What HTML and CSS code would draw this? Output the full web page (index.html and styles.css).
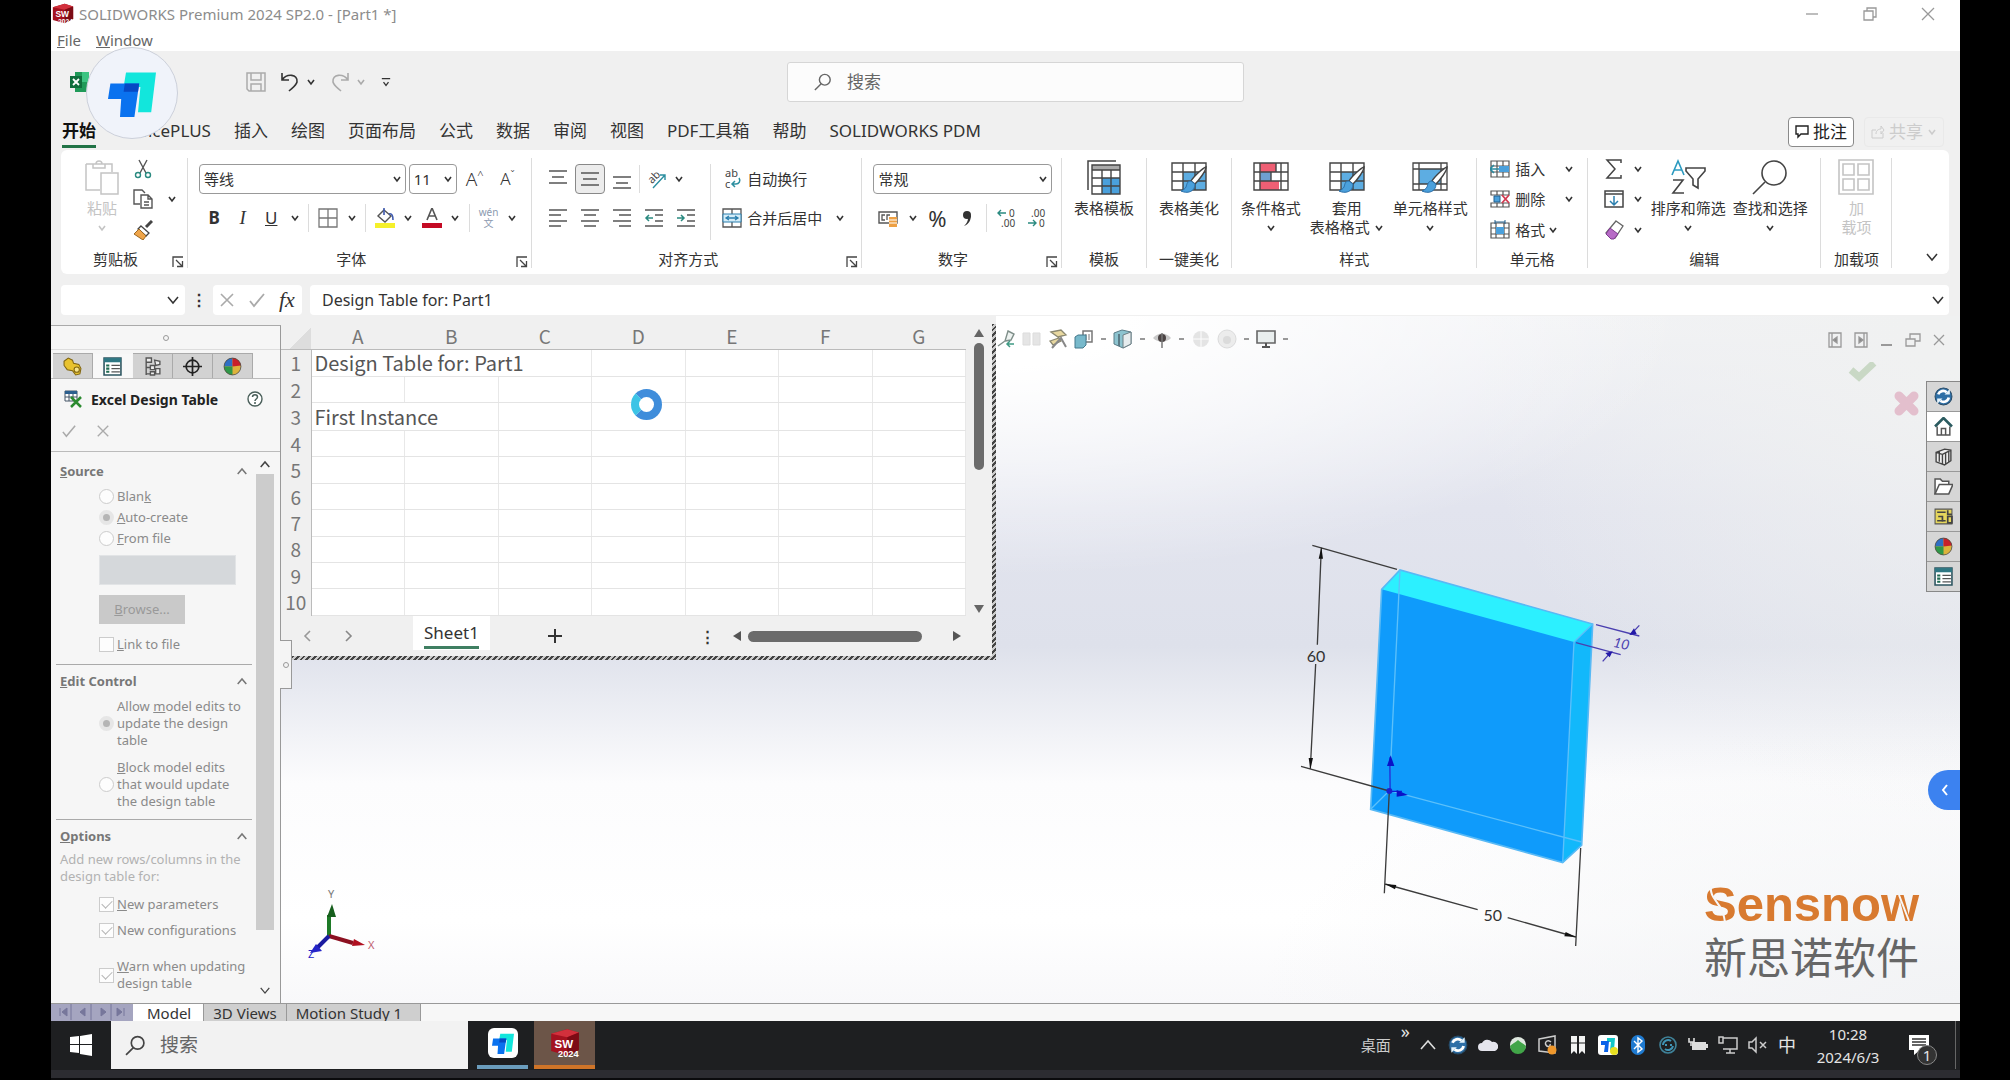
FILE: index.html
```
<!DOCTYPE html>
<html lang="zh-CN">
<head>
    <meta charset="UTF-8">
    <meta name="viewport" content="width=device-width, initial-scale=1.0">
    <title>SOLIDWORKS Premium 2024 SP2.0 - [Part1 *]</title>
    <link rel="stylesheet" href="styles.css">
</head>

<body>
    <!-- Shared icons -->
    <svg class="sprite" aria-hidden="true">
        <symbol id="caret" viewBox="0 0 10 10"><path d="M2 3l3 4 3-4" fill="none" stroke="currentColor" stroke-width="1.6"/></symbol>
        <symbol id="chevron" viewBox="0 0 14 10"><path d="M2 2l5 6 5-6" fill="none" stroke="currentColor" stroke-width="1.5"/></symbol>
        <symbol id="chevron-up" viewBox="0 0 14 10"><path d="M2 8l5-6 5 6" fill="none" stroke="currentColor" stroke-width="1.8"/></symbol>
        <symbol id="launcher" viewBox="0 0 12 12"><path d="M1 11V1h10M4 4l6 6M10.500 5v5.500H5" fill="none" stroke="#444" stroke-width="1.3"/></symbol>
        <symbol id="search" viewBox="0 0 20 20"><path d="M8 12l-7 7" fill="none" stroke="currentColor" stroke-width="1.6"/><circle cx="12" cy="7.500" r="6" fill="none" stroke="currentColor" stroke-width="1.6"/></symbol>
        <symbol id="cross" viewBox="0 0 16 16"><path d="M2 2l12 12M14 2L2 14" fill="none" stroke="currentColor" stroke-width="1.6"/></symbol>
        <symbol id="tick" viewBox="0 0 16 16"><path d="M1 9l4 5L15 2" fill="none" stroke="currentColor" stroke-width="1.8"/></symbol>
        <symbol id="brush" viewBox="0 0 36 36"><path d="M35 8c-3 1-12 9-15 14l4 3c4-4 11-13 11-17z" fill="#fff" stroke="#444" stroke-width="1.4"/><path d="M20 22c-4 0-4 3-5 6-1 2-3 3-5 4 6 3 14 1 14-7z" fill="#4aa0dc" stroke="#2b6fa8"/></symbol>
        <symbol id="solidworks" viewBox="0 0 26 26"><path d="M1 5l14-4 10 3v15l-10 5-14-4z" fill="#a4121f"/><path d="M1 5l14-4 10 3-10 4z" fill="#d2303c"/><path d="M15 8l10-4v15l-10 5z" fill="#7c0b15"/><text x="4" y="17" class="sw-letters">SW</text><text x="7" y="25" class="sw-year">2024</text></symbol>
        <symbol id="meeting" viewBox="0 0 40 40"><path d="M15 3h25l-4 33H25l2-21H13z" fill="#12e6dc"/><path d="M2 12h24l-4 28H10l1-15H0z" fill="#0a72ef"/><path d="M14 12h12l-1 7H13z" fill="#0649c4"/></symbol>
        <symbol id="ball" viewBox="0 0 18 18"><circle cx="9" cy="9" r="8" fill="#ddb33c"/><path d="M9 9V1a8 8 0 0 0-8 8z" fill="#2f6fc4"/><path d="M9 9V1a8 8 0 0 1 8 7z" fill="#c8202a"/><path d="M9 9H1a8 8 0 0 0 8 8z" fill="#2f9848"/><circle cx="9" cy="9" r="8" fill="none" stroke="#444" stroke-width=".7"/></symbol>
        <symbol id="list" viewBox="0 0 18 18"><path d="M1 1h16v16H1z" fill="#fff" stroke="#2d5560" stroke-width="1.5"/><path d="M1 1h16v4H1z" fill="#2f7783"/><path d="M3 8h3M3 11h3M3 14h3" stroke="#1f6a50" stroke-width="2"/><path d="M8 8h8M8 11h8M8 14h8" stroke="#555" stroke-width="1.2"/></symbol>
        <symbol id="recycle" viewBox="0 0 18 18"><circle cx="9" cy="9" r="8" fill="#2e6fa6" stroke="#274a66"/><path d="M4 7a5 5 0 0 1 8-2M14 10a5 5 0 0 1-8 3" fill="none" stroke="#fff" stroke-width="2.500"/><path d="M10 7h5V2zM8 11H3v5z" fill="#e6f3fb"/></symbol>
    </svg>

    <main class="app">
        <header class="title-bar">
            <svg class="app-icon"><use href="#solidworks"/></svg>
            <h1>SOLIDWORKS Premium 2024 SP2.0 - [Part1 *]</h1>
            <div class="window-buttons">
                <button aria-label="Minimize"><svg viewBox="0 0 16 16"><path d="M2 8h12"/></svg></button>
                <button aria-label="Restore"><svg viewBox="0 0 16 16"><path d="M2 5h9v9H2zM5 5V2h9v9h-3"/></svg></button>
                <button aria-label="Close"><svg viewBox="0 0 16 16"><path d="M2 2l12 12M14 2L2 14"/></svg></button>
            </div>
        </header>
        <nav class="menu-bar">
            <a href="#"><u>F</u>ile</a>
            <a href="#"><u>W</u>indow</a>
        </nav>

        <div class="quick-bar">
            <svg class="excel-icon" viewBox="0 0 20 20"><path d="M5 0h14v20H5z" fill="#1f9a58"/><path d="M12 0h7v10h-7z" fill="#3cc481"/><path d="M0 4h12v12H0z" fill="#0f6e3c"/><path d="M3 7l6 6M9 7l-6 6" stroke="#fff" stroke-width="1.8"/></svg>
            <div class="quick-tools">
                <button aria-label="Save"><svg class="i20 faded" viewBox="0 0 20 20"><path d="M1 1h18v18H3l-2-2zM5 1v7h10V1M5 19v-7h10v7" fill="none" stroke="currentColor" stroke-width="1.5"/></svg></button>
                <button aria-label="Undo"><svg class="i20" viewBox="0 0 20 20"><path d="M2 1v7h7M2 8c5-7 16-6 15 2-1 4-5 6-8 9" fill="none" stroke="currentColor" stroke-width="1.6"/></svg><svg class="caret"><use href="#caret"/></svg></button>
                <button aria-label="Redo" class="faded"><svg class="i20" viewBox="0 0 20 20"><path d="M18 1v7h-7M18 8C13 1 2 2 3 10c1 4 5 6 8 9" fill="none" stroke="currentColor" stroke-width="1.6"/></svg><svg class="caret"><use href="#caret"/></svg></button>
                <button aria-label="Customize"><svg class="caret" viewBox="0 0 10 12"><path d="M0 2h10M2 6l3 4 3-4" fill="none" stroke="currentColor" stroke-width="1.5"/></svg></button>
            </div>
            <label class="search-box">
                <svg><use href="#search"/></svg>
                <input type="text" placeholder="搜索" aria-label="搜索">
            </label>
        </div>

        <nav class="tab-bar">
            <a href="#" class="active">开始</a>
            <a href="#">OfficePLUS</a>
            <a href="#">插入</a>
            <a href="#">绘图</a>
            <a href="#">页面布局</a>
            <a href="#">公式</a>
            <a href="#">数据</a>
            <a href="#">审阅</a>
            <a href="#">视图</a>
            <a href="#">PDF工具箱</a>
            <a href="#">帮助</a>
            <a href="#">SOLIDWORKS PDM</a>
            <button class="comment-btn"><svg viewBox="0 0 14 14"><path d="M1 1h12v8H6l-3 3V9H1z" fill="none" stroke="currentColor" stroke-width="1.4"/></svg>批注</button>
            <button class="share-btn" disabled><svg viewBox="0 0 14 14"><path d="M5 5H1v8h11V8M5 9c0-4 3-5 5-5V1l3 4-3 4V6" fill="none" stroke="currentColor"/></svg>共享<svg class="caret"><use href="#caret"/></svg></button>
        </nav>

        <section class="ribbon">
            <div class="group">
                <div class="group-body clipboard">
                    <button class="big" disabled>
                        <svg viewBox="0 0 36 36"><path d="M2 5h26v8M2 5v26h14M9 5h3c0-4 6-4 6 0h3v4H9zM17 14h17v21H17z" fill="none" stroke="currentColor" stroke-width="1.5"/></svg>
                        <span>粘贴</span><svg class="caret"><use href="#caret"/></svg>
                    </button>
                    <div class="stack">
                        <button aria-label="剪切"><svg class="i20" viewBox="0 0 20 20"><path d="M6 1l7 13M14 1L7 14" stroke="#555" stroke-width="1.4"/><circle cx="5" cy="16" r="2.500" fill="none" stroke="#2a8a80" stroke-width="1.4"/><circle cx="15" cy="16" r="2.500" fill="none" stroke="#2a8a80" stroke-width="1.4"/></svg></button>
                        <button aria-label="复制"><svg class="i20" viewBox="0 0 20 20"><path d="M7 15H1V1h8l3 3M8 6h7l4 4v9H8zM15 6v4h4M11 13h5M11 16h5" fill="none" stroke="#555" stroke-width="1.4"/></svg><svg class="caret"><use href="#caret"/></svg></button>
                        <button aria-label="格式刷"><svg class="i20" viewBox="0 0 20 20"><path d="M19 1l-6 6" stroke="#444" stroke-width="3"/><path d="M8 6l8 7-3 3-8-7z" fill="#fff" stroke="#444" stroke-width="1.3"/><path d="M6 9l7 7-3 4-9-6z" fill="#efa54a" stroke="#9b6722"/></svg></button>
                    </div>
                </div>
                <div class="group-label with-launcher">剪贴板<svg><use href="#launcher"/></svg></div>
            </div>

            <div class="group">
                <div class="group-body font-body">
                    <div class="row">
                        <div class="combo combo-font"><select aria-label="字体"><option>等线</option></select><svg class="caret"><use href="#caret"/></svg></div>
                        <div class="combo combo-size"><select aria-label="字号"><option>11</option></select><svg class="caret"><use href="#caret"/></svg></div>
                        <button class="letter grow">A<sup>^</sup></button>
                        <button class="letter shrink">A<sup>ˇ</sup></button>
                    </div>
                    <div class="row spread">
                        <button class="i20 letter"><b>B</b></button>
                        <button class="i20 letter serif"><i>I</i></button>
                        <button class="i20 letter"><u>U</u></button>
                        <svg class="caret"><use href="#caret"/></svg>
                        <span class="sep"></span>
                        <button aria-label="边框"><svg class="i20" viewBox="0 0 20 20"><path d="M1 1h18v18H1zM10 1v18M1 10h18" fill="none" stroke="#777" stroke-width="1.3"/></svg></button>
                        <svg class="caret"><use href="#caret"/></svg>
                        <span class="sep"></span>
                        <button aria-label="填充颜色"><svg class="i20" viewBox="0 0 20 20"><path d="M0 15h20v5H0z" fill="#f5f02a"/><path d="M9 2l7 6-6 6-7-6z" fill="#fff" stroke="#555" stroke-width="1.4"/><path d="M9 7V0M14 6c3-1 4 2 4 6" fill="none" stroke="#3f5bb0" stroke-width="1.6"/></svg></button>
                        <svg class="caret"><use href="#caret"/></svg>
                        <button aria-label="字体颜色"><svg class="i20" viewBox="0 0 20 20"><path d="M0 15h20v5H0z" fill="#c40a24"/><path d="M5 12l5-12 5 12M7 8h6" fill="none" stroke="#555" stroke-width="1.6"/></svg></button>
                        <svg class="caret"><use href="#caret"/></svg>
                        <span class="sep"></span>
                        <button class="i20 phonetic">wén<br>文</button>
                        <svg class="caret"><use href="#caret"/></svg>
                    </div>
                </div>
                <div class="group-label with-launcher">字体<svg><use href="#launcher"/></svg></div>
            </div>

            <div class="group">
                <div class="group-body align-body">
                    <div class="align-left">
                        <div class="row gap-7">
                            <button aria-label="顶端对齐"><svg class="i20 lines" viewBox="0 0 20 20"><path d="M1 2h18M4 8h12M1 14h18"/></svg></button>
                            <button aria-label="垂直居中" class="pressed"><svg class="i20 lines" viewBox="0 0 20 20"><path d="M1 4h18M3 10h14M1 16h18"/></svg></button>
                            <button aria-label="底端对齐"><svg class="i20 lines" viewBox="0 0 20 20"><path d="M1 8h18M4 14h12M1 19h18"/></svg></button>
                            <span class="sep"></span>
                            <button aria-label="方向"><svg class="i20" viewBox="0 0 20 20"><text x="1" y="12" transform="rotate(-45 7 9)" class="tiny-ab">ab</text><path d="M6 19L18 6M18 11V6h-5" fill="none" stroke="#2c8fa0" stroke-width="1.4"/></svg></button>
                            <svg class="caret"><use href="#caret"/></svg>
                        </div>
                        <div class="row gap-12">
                            <button aria-label="左对齐"><svg class="i20 lines" viewBox="0 0 20 20"><path d="M1 2h18M1 7h12M1 13h18M1 18h12"/></svg></button>
                            <button aria-label="居中"><svg class="i20 lines" viewBox="0 0 20 20"><path d="M1 2h18M4 7h12M1 13h18M4 18h12"/></svg></button>
                            <button aria-label="右对齐"><svg class="i20 lines" viewBox="0 0 20 20"><path d="M1 2h18M7 7h12M1 13h18M7 18h12"/></svg></button>
                            <button aria-label="减少缩进"><svg class="i20 lines" viewBox="0 0 20 20"><path d="M1 2h18M11 7h8M11 13h8M1 18h18"/><path class="teal" d="M9 10H2M5 7l-3 3 3 3"/></svg></button>
                            <button aria-label="增加缩进"><svg class="i20 lines" viewBox="0 0 20 20"><path d="M1 2h18M11 7h8M11 13h8M1 18h18"/><path class="teal" d="M1 10h7M5 7l3 3-3 3"/></svg></button>
                        </div>
                    </div>
                    <span class="sep tall"></span>
                    <div class="align-right">
                        <button class="row gap-5"><svg class="i20" viewBox="0 0 20 20"><text x="3" y="8" class="tiny-ab">ab</text><text x="3" y="19" class="tiny-ab">c</text><path d="M17 9c2 3 0 6-3 6h-4M13 12l-3 3 3 3" fill="none" stroke="#2c8fa0" stroke-width="1.5"/></svg>自动换行</button>
                        <button class="row gap-5"><svg class="i20" viewBox="0 0 20 20"><path d="M1 1h18v18H1zM10 1v5M10 14v5" fill="#fff" stroke="#555" stroke-width="1.3"/><path d="M1 6h18v8H1z" fill="#d5edf8" stroke="#2b7fae"/><path d="M4 10h12M7 8l-3 2 3 2M13 8l3 2-3 2" fill="none" stroke="#2b7fae" stroke-width="1.3"/></svg>合并后居中<svg class="caret merge-caret"><use href="#caret"/></svg></button>
                    </div>
                </div>
                <div class="group-label with-launcher">对齐方式<svg><use href="#launcher"/></svg></div>
            </div>

            <div class="group">
                <div class="group-body number-body">
                    <div class="combo combo-number"><select aria-label="数字格式"><option>常规</option></select><svg class="caret"><use href="#caret"/></svg></div>
                    <div class="row spread">
                        <button aria-label="会计数字格式"><svg class="i20" viewBox="0 0 20 20"><path d="M1 4h18v11H1z" fill="#fff" stroke="#555" stroke-width="1.4"/><path d="M7 7H4v5h3M12 7H9v5" fill="none" stroke="#555" stroke-width="1.3"/><path d="M11 9h8v10h-8z" fill="#eda044"/><path d="M11 12h8M11 15h8" stroke="#fff"/></svg></button>
                        <svg class="caret"><use href="#caret"/></svg>
                        <button class="i20 percent">%</button>
                        <button class="comma" aria-label="千位分隔样式"><svg class="i20" viewBox="0 0 20 20"><circle cx="10" cy="7" r="4" fill="#333"/><path d="M14 7c0 5-2 9-7 11 3-3 4-5 4-8z" fill="#333"/></svg></button>
                        <span class="sep"></span>
                        <button aria-label="增加小数位数"><svg class="i20" viewBox="0 0 20 20"><text x="12" y="9" class="decimal">0</text><text x="4" y="19" class="decimal">.00</text><path d="M9 5H1M4 2L1 5l3 3" fill="none" stroke="#2a8a80" stroke-width="1.4"/></svg></button>
                        <button aria-label="减少小数位数"><svg class="i20" viewBox="0 0 20 20"><text x="4" y="9" class="decimal">.00</text><text x="12" y="19" class="decimal">0</text><path d="M1 15h8M6 12l3 3-3 3" fill="none" stroke="#2a8a80" stroke-width="1.4"/></svg></button>
                    </div>
                </div>
                <div class="group-label with-launcher">数字<svg><use href="#launcher"/></svg></div>
            </div>

            <div class="group">
                <div class="group-body center">
                    <button class="big">
                        <svg viewBox="0 0 36 36"><path d="M2 31V2h28" fill="none" stroke="#444" stroke-width="1.5"/><path d="M6 6h28v29H6z" fill="#fff"/><path d="M16 19h18v16H16z" fill="#4aa0dc"/><path d="M6 6h28v5H6z" fill="#aaa"/><path d="M6 6h28v29H6zM6 11h28M6 19h28M6 27h28M16 11v24M25 11v24" fill="none" stroke="#444" stroke-width="1.4"/></svg>
                        <span>表格模板</span>
                    </button>
                </div>
                <div class="group-label">模板</div>
            </div>

            <div class="group">
                <div class="group-body center">
                    <button class="big">
                        <svg viewBox="0 0 36 36"><path d="M1 4h34v27H1z" fill="#fff"/><path d="M12 13h23v18H12z" fill="#5dade2"/><path d="M1 4h34v27H1zM1 13h34M1 22h34M12 4v27M24 4v27" fill="none" stroke="#444" stroke-width="1.4"/><use href="#brush"/></svg>
                        <span>表格美化</span>
                    </button>
                </div>
                <div class="group-label">一键美化</div>
            </div>

            <div class="group">
                <div class="group-body center styles-body">
                    <button class="big">
                        <svg viewBox="0 0 36 36"><path d="M1 4h34v27H1z" fill="#fff"/><path d="M7 4h16v9H7zM7 22h19v9H7z" fill="#ef5f74"/><path d="M7 13h11v9H7z" fill="#6f9fd0"/><path d="M1 4h34v27H1zM1 13h34M1 22h34M7 4v27M28 4v27M18 13v9M23 4v9" fill="none" stroke="#444" stroke-width="1.4"/></svg>
                        <span>条件格式</span><svg class="caret"><use href="#caret"/></svg>
                    </button>
                    <button class="big">
                        <svg viewBox="0 0 36 36"><path d="M1 4h34v27H1z" fill="#fff"/><path d="M12 13h23v18H12z" fill="#5dade2"/><path d="M1 4h34v27H1zM1 13h34M1 22h34M12 4v27M24 4v27" fill="none" stroke="#444" stroke-width="1.4"/><use href="#brush"/></svg>
                        <span>套用</span><span>表格格式<svg class="caret inline"><use href="#caret"/></svg></span>
                    </button>
                    <button class="big">
                        <svg viewBox="0 0 36 36"><path d="M1 4h34v27H1z" fill="#fff"/><path d="M7 10h22v15H7z" fill="#5dade2"/><path d="M1 4h34v27H1zM1 10h34M1 25h34M7 4v27M29 4v27" fill="none" stroke="#444" stroke-width="1.3"/><use href="#brush"/></svg>
                        <span>单元格样式</span><svg class="caret"><use href="#caret"/></svg>
                    </button>
                </div>
                <div class="group-label">样式</div>
            </div>

            <div class="group">
                <div class="group-body center">
                    <div class="stack cells-stack">
                        <button><svg class="i20" viewBox="0 0 20 20"><path d="M1 2h18v16H1zM1 7h18M1 13h18M7 2v16M13 2v16" fill="#fff" stroke="#555" stroke-width="1.2"/><path d="M9 7h10v6H9z" fill="#4aa0dc"/><path d="M9 10H1M4 6l-4 4 4 4" fill="none" stroke="#2a8aa0" stroke-width="1.6"/></svg><span>插入</span><svg class="caret"><use href="#caret"/></svg></button>
                        <button><svg class="i20" viewBox="0 0 20 20"><path d="M1 2h18v4H1zM1 14h18v4H1zM7 2v4M13 2v4M7 14v4M13 14v4" fill="#fff" stroke="#555" stroke-width="1.2"/><path d="M4 7h6v6H4z" fill="#4aa0dc" stroke="#235f8c"/><path d="M12 6l7 8M19 6l-7 8" stroke="#d23a50" stroke-width="1.8"/></svg><span>删除</span><svg class="caret"><use href="#caret"/></svg></button>
                        <button><svg class="i20" viewBox="0 0 20 20"><path d="M1 3h18v15H1zM1 8h18M1 14h18M6 3v15M14 3v15" fill="#fff" stroke="#555" stroke-width="1.2"/><path d="M6 7h8v7H6z" fill="#4aa0dc"/><path d="M5 0v4M15 0v4M5 2h10" stroke="#235f8c"/></svg><span>格式</span><svg class="caret near"><use href="#caret"/></svg></button>
                    </div>
                </div>
                <div class="group-label">单元格</div>
            </div>

            <div class="group">
                <div class="group-body edit-body">
                    <div class="stack">
                        <button aria-label="求和"><svg class="i20" viewBox="0 0 20 20"><path d="M17 4V1H3l8 9-8 9h14v-3" fill="none" stroke="#444" stroke-width="1.5"/></svg><svg class="caret"><use href="#caret"/></svg></button>
                        <button aria-label="填充"><svg class="i20" viewBox="0 0 20 20"><path d="M1 2h18v16H1zM1 5h18" fill="#fff" stroke="#444" stroke-width="1.5"/><path d="M10 7v9M6 12l4 4 4-4" fill="none" stroke="#2b7fae" stroke-width="1.5"/></svg><svg class="caret"><use href="#caret"/></svg></button>
                        <button aria-label="清除"><svg class="i20" viewBox="0 0 20 20"><path d="M12 1l7 5-8 12H7l-5-5z" fill="#fff" stroke="#666" stroke-width="1.3"/><path d="M6 8l8 6-4 5H7l-5-5z" fill="#b76bc6" stroke="#7f3c91"/></svg><svg class="caret"><use href="#caret"/></svg></button>
                    </div>
                    <button class="big">
                        <svg viewBox="0 0 36 36"><path d="M2 16L8 2l6 14M4 11h8" fill="none" stroke="#2b9ac0" stroke-width="1.6"/><path d="M3 21h10L3 34h11" fill="none" stroke="#444" stroke-width="1.6"/><path d="M16 9h19v3l-7 8v9l-5-3v-6l-7-8z" fill="none" stroke="#444" stroke-width="1.6"/></svg>
                        <span>排序和筛选</span><svg class="caret"><use href="#caret"/></svg>
                    </button>
                    <button class="big">
                        <svg viewBox="0 0 36 36"><circle cx="22" cy="14" r="12" fill="#fff" stroke="#444" stroke-width="1.6"/><path d="M13 23L1 35" stroke="#444" stroke-width="1.6"/></svg>
                        <span>查找和选择</span><svg class="caret"><use href="#caret"/></svg>
                    </button>
                </div>
                <div class="group-label">编辑</div>
            </div>

            <div class="group">
                <div class="group-body center">
                    <button class="big" disabled>
                        <svg viewBox="0 0 36 36"><path d="M1 1h34v34H1zM5 5h11v11H5zM20 5h11v11H20zM5 20h11v11H5zM20 20h11v11H20z" fill="none" stroke="currentColor" stroke-width="1.6"/></svg>
                        <span>加</span><span>载项</span>
                    </button>
                </div>
                <div class="group-label">加载项</div>
            </div>

            <button class="collapse" aria-label="折叠功能区"><svg class="chev"><use href="#chevron"/></svg></button>
        </section>

        <section class="formula-bar">
            <div class="name-box"><input type="text" aria-label="名称框"><svg class="chev"><use href="#chevron"/></svg></div>
            <span class="dots">⋮</span>
            <div class="fx-box">
                <svg class="i16"><use href="#cross"/></svg>
                <svg class="i16"><use href="#tick"/></svg>
                <i>fx</i>
            </div>
            <div class="formula-input"><input type="text" value="Design Table for: Part1" aria-label="编辑栏"><svg class="chev"><use href="#chevron"/></svg></div>
        </section>

        <section class="workspace">
            <aside class="panel">
                <div class="panel-grip"><span></span></div>
                <div class="panel-tabs">
                    <button aria-label="FeatureManager"><svg viewBox="0 0 18 18"><path d="M1 4l4-3 4 2 1 3 5 1 2 4-1 5-4 1-3-4-5-1-3-4z" fill="#e8c22e" stroke="#806512"/><circle cx="13" cy="12" r="2.500" fill="#f7e48c" stroke="#806512"/></svg></button>
                    <button aria-label="PropertyManager" class="active"><svg><use href="#list"/></svg></button>
                    <button aria-label="ConfigurationManager"><svg viewBox="0 0 18 18"><path d="M3 1h5v4H3zM3 5v12M3 10h4M3 16h4M7 8h4v4H7zM7 14h4v3H7zM11 3l5 1v3l-4 1zM12 11h4v5h-4z" fill="#eee" stroke="#555" stroke-width="1.3"/></svg></button>
                    <button aria-label="DimXpertManager"><svg viewBox="0 0 18 18"><circle cx="9" cy="9" r="6" fill="none" stroke="#222" stroke-width="1.6"/><path d="M9 0v18M0 9h18" stroke="#222" stroke-width="1.6"/></svg></button>
                    <button aria-label="DisplayManager"><svg><use href="#ball"/></svg></button>
                </div>
                <div class="panel-title">
                    <svg class="i18" viewBox="0 0 18 18"><path d="M1 1h12v10H1z" fill="#fff" stroke="#456"/><path d="M1 1h12v3H1z" fill="#2c5f8e"/><path d="M1 7h12M5 4v7M9 4v7" stroke="#456"/><path d="M7 7l10 10M17 7L7 17" stroke="#2b8a2f" stroke-width="2.500"/></svg>
                    <h2>Excel Design Table</h2>
                    <svg class="i16 help" viewBox="0 0 16 16"><circle cx="8" cy="8" r="7" fill="#fff" stroke="#4a5f5a" stroke-width="1.4"/><path d="M5.500 6c0-3 5-3 5 0 0 2-2.500 2-2.500 4M8 11v2" fill="none" stroke="#4a5f5a" stroke-width="1.5"/></svg>
                </div>
                <div class="panel-actions">
                    <svg class="i14"><use href="#tick"/></svg>
                    <svg class="i14"><use href="#cross"/></svg>
                </div>
                <div class="panel-scroll">
                    <form class="panel-form">
                        <fieldset>
                            <h3><span><u>S</u>ource</span><svg><use href="#chevron-up"/></svg></h3>
                            <label class="option"><input type="radio" name="source" disabled><span>Blan<u>k</u></span></label>
                            <label class="option"><input type="radio" name="source" checked disabled><span><u>A</u>uto-create</span></label>
                            <label class="option"><input type="radio" name="source" disabled><span><u>F</u>rom file</span></label>
                            <input type="text" class="file-name" aria-label="File name" disabled>
                            <button class="browse" type="button" disabled><u>B</u>rowse...</button>
                            <label class="option"><input type="checkbox" disabled><span><u>L</u>ink to file</span></label>
                        </fieldset>
                        <fieldset class="edit-control">
                            <h3><span><u>E</u>dit Control</span><svg><use href="#chevron-up"/></svg></h3>
                            <label class="option"><input type="radio" name="edit" checked disabled><span>Allow <u>m</u>odel edits to<br>update the design<br>table</span></label>
                            <label class="option"><input type="radio" name="edit" disabled><span><u>B</u>lock model edits<br>that would update<br>the design table</span></label>
                        </fieldset>
                        <fieldset class="options">
                            <h3><span><u>O</u>ptions</span><svg><use href="#chevron-up"/></svg></h3>
                            <p>Add new rows/columns in the<br>design table for:</p>
                            <label class="option"><input type="checkbox" checked disabled><span><u>N</u>ew parameters</span></label>
                            <label class="option"><input type="checkbox" checked disabled><span>New configurations</span></label>
                            <label class="option warn"><input type="checkbox" checked disabled><span><u>W</u>arn when updating<br>design table</span></label>
                        </fieldset>
                    </form>
                    <div class="panel-scrollbar">
                        <svg><use href="#chevron-up"/></svg>
                        <span></span>
                        <svg><use href="#chevron"/></svg>
                    </div>
                </div>
                <div class="splitter"><span></span></div>
            </aside>

            <div class="viewport">
                <div class="hud">
                    <svg viewBox="0 0 20 20"><path d="M12 2l6 3-3 6-6 1zM9 12l-7 5" fill="#eef3f1" stroke="#7f8f8a" stroke-width="1.4"/><path d="M18 15h-7M14 12l-3 3 3 3" fill="none" stroke="#3f9a84" stroke-width="1.5"/></svg>
                    <svg viewBox="0 0 20 20" class="dim"><path d="M1 4h7v12H1zM11 4h7v12h-7z" fill="#ccc" stroke="#bbb"/></svg>
                    <svg viewBox="0 0 20 20"><path d="M3 3l10-2 5 5-8 2zM2 12l9-3 2 3-8 4z" fill="#e8d8a0" stroke="#8b8871" stroke-width="1.3"/><path d="M4 19l9-10 5 9" fill="none" stroke="#888" stroke-width="2"/></svg>
                    <svg viewBox="0 0 20 20"><path d="M9 2h9v11H9z" fill="#fff" stroke="#777" stroke-width="1.5"/><path d="M12 5v6M15 5v6" stroke="#777"/><path d="M1 8l3-2h8v10l-3 3H1z" fill="#78b9cb" stroke="#44798c"/></svg>
                    <i></i>
                    <svg viewBox="0 0 20 20"><path d="M1 4l8-3 9 2v12l-8 4-9-4z" fill="#8cc3cf" stroke="#5b7c87"/><path d="M10 6l8-3v12l-8 4z" fill="#e6ecee" stroke="#6d7e84"/><path d="M6 5v12" stroke="#5b7c87" stroke-width="2"/></svg>
                    <i></i>
                    <svg viewBox="0 0 20 20"><path d="M1 9c5-6 13-6 18 0-5 5-13 5-18 0z" fill="#c9c9c9"/><circle cx="10" cy="9" r="4" fill="#4b4343"/><path d="M10 4v15" stroke="#777" stroke-width="1.5"/></svg>
                    <i></i>
                    <svg viewBox="0 0 20 20" class="dim"><circle cx="10" cy="10" r="8" fill="#ccc"/><path d="M2 10h16M10 2v16" stroke="#fff"/></svg>
                    <svg viewBox="0 0 20 20" class="dim"><circle cx="10" cy="10" r="9" fill="#ddd" stroke="#bbb"/><circle cx="10" cy="11" r="4" fill="#bbb"/></svg>
                    <i></i>
                    <svg viewBox="0 0 20 20"><path d="M1 2h18v12H1z" fill="#e9eeee" stroke="#666" stroke-width="1.6"/><path d="M10 14v4M6 18h8" stroke="#555" stroke-width="2"/></svg>
                    <i></i>
                </div>

                <div class="doc-buttons">
                    <button aria-label="Pane left"><svg viewBox="0 0 16 16"><path d="M2 1h12v14H2zM5 1v14"/><path d="M10 5v6L6 8z" fill="#888"/></svg></button>
                    <button aria-label="Pane right"><svg viewBox="0 0 16 16"><path d="M2 1h12v14H2zM11 1v14"/><path d="M6 5v6l4-3z" fill="#888"/></svg></button>
                    <button aria-label="Minimize document"><svg viewBox="0 0 16 16"><path d="M2 13h11" stroke-width="2"/></svg></button>
                    <button aria-label="Restore document"><svg viewBox="0 0 16 16"><path d="M1 7h9v7H1zM5 7V2h10v7h-5"/></svg></button>
                    <button aria-label="Close document"><svg viewBox="0 0 16 16"><path d="M3 3l10 10M13 3L3 13"/></svg></button>
                </div>
                <svg class="confirm" viewBox="0 0 72 56"><path d="M3 8l8 7L26 1" fill="none" stroke="#c9d8c5" stroke-width="7"/><path d="M51 34l15 15M66 34L51 49" stroke="#e3bfcd" stroke-width="9" stroke-linecap="round"/></svg>

                <svg class="model" viewBox="0 0 1200 1320">
                    <path d="M305 208L360 150 938 312 905 975 848 1028 272 868z" fill="#0f9bfb"/>
                    <path d="M305 208L360 150 938 312 882 366z" fill="#2cf0ff"/>
                    <path d="M882 366L938 312 905 975 848 1028z" fill="#12b8fb"/>
                    <path d="M305 208L360 150 938 312 905 975 848 1028 272 868z" fill="none" stroke="#58b9f5" stroke-width="5"/>
                    <path d="M882 366L848 1028M360 150L328 812 272 868M328 812L905 966M882 366L938 312" fill="none" stroke="#5cc0fa" stroke-width="4"/>
                    <g stroke="#3c3c3c" stroke-width="4" fill="none">
                        <path d="M97 76l254 72M63 739l265 74M124 82l-12 292M107 432L91 745"/>
                        <path d="M328 812l-15 308M902 984l-15 294M315 1092l278 77M683 1193l204 58"/>
                    </g>
                    <path d="M124 82l-8 34h13zM91 748l-5-34h13zM315 1092l34 3-4 13zM888 1251l-31-15-4 13z" fill="#111"/>
                    <g stroke="#4a3fb0" stroke-width="4" fill="none">
                        <path d="M948 314l130 34M888 368l134 36M1078 316l-26 28M968 424l24-27"/>
                    </g>
                    <path d="M1048 345l14-20 8 17zM998 394l-22 5 13 13z" fill="#2419a8"/>
                    <path d="M330 712v102h36" stroke="#0d22d8" stroke-width="4" fill="none"/>
                    <path d="M332 706l-11 32h22zM384 825l-34-15v20z" fill="#0a12c8"/>
                    <circle cx="328" cy="813" r="9" fill="#1a22d0"/>
                    <text x="108" y="426" class="dimension">60</text>
                    <text x="638" y="1204" class="dimension">50</text>
                    <text x="1024" y="386" class="dimension depth" transform="rotate(12 1024 372)">10</text>
                </svg>

                <svg class="triad" viewBox="0 0 80 80">
                    <path d="M24 52V30" stroke="#1e7a27" stroke-width="4"/><path d="M27 19l-5 13h9z" fill="#175f1d"/>
                    <path d="M24 51l24 7" stroke="#8c1020" stroke-width="4"/><path d="M60 60l-13 1 2-7z" fill="#b01020"/>
                    <path d="M24 51L12 63" stroke="#1a1aa0" stroke-width="4"/><path d="M5 68l12-2-6-7z" fill="#2424c8"/>
                    <text x="23" y="13" class="axis-y">Y</text><text x="63" y="64" class="axis-x">X</text><text x="3" y="73" class="axis-z">Z</text>
                </svg>

                <div class="brand">
                    <svg viewBox="0 0 216 42" class="brand-name"><text x="0" y="37">Sensnow</text><path d="M7 2c-2 14 12 16 14 36M195 11l10 26" fill="none" stroke="#f6f7f9" stroke-width="2"/></svg>
                    <div class="brand-cn">新思诺软件</div>
                </div>

                <nav class="task-pane">
                    <button aria-label="3DEXPERIENCE"><svg><use href="#recycle"/></svg></button>
                    <button aria-label="Resources" class="active"><svg viewBox="0 0 18 18"><path d="M3 9v8h12V9" fill="#fff" stroke="#555" stroke-width="1.4"/><path d="M7 17v-6h4v6" fill="none" stroke="#555" stroke-width="1.4"/><path d="M1 9l8-8 8 8" fill="none" stroke="#2b5b60" stroke-width="2.500"/></svg></button>
                    <button aria-label="Design Library"><svg viewBox="0 0 18 18"><path d="M2 5l8-3 6 1v10l-6 4-8-3zM2 5l6 2v10M8 7l8-4M5 4v10M11 6v10M14 4v10" fill="#eee" stroke="#444" stroke-width="1.3"/></svg></button>
                    <button aria-label="File Explorer"><svg viewBox="0 0 18 18"><path d="M1 16V2h5l2 2h6v3" fill="#fff" stroke="#555" stroke-width="1.4"/><path d="M1 16L5 7h13l-4 9z" fill="#fff" stroke="#555" stroke-width="1.4"/></svg></button>
                    <button aria-label="View Palette"><svg viewBox="0 0 18 18"><path d="M1 2h16v14H1z" fill="#e5d65c" stroke="#555"/><path d="M3 5h8M4 9h4v5M3 13h8M13 3v4h4M13 9h4v6h-4z" fill="none" stroke="#444" stroke-width="1.6"/></svg></button>
                    <button aria-label="Appearances"><svg><use href="#ball"/></svg></button>
                    <button aria-label="Custom Properties"><svg><use href="#list"/></svg></button>
                </nav>
                <button class="bubble" aria-label="Expand"><svg viewBox="0 0 10 14"><path d="M7 2L3 7l4 5" fill="none" stroke="#fff" stroke-width="2"/></svg></button>

                <!-- Embedded Excel sheet -->
                <div class="excel">
                    <div class="sheet-area">
                        <table>
                            <thead>
                                <tr><th class="corner"></th><th>A</th><th>B</th><th>C</th><th>D</th><th>E</th><th>F</th><th>G</th></tr>
                            </thead>
                            <tbody>
                                <tr><th>1</th><td colspan="3">Design Table for: Part1</td><td></td><td></td><td></td><td></td></tr>
                                <tr><th>2</th><td></td><td></td><td></td><td></td><td></td><td></td><td></td></tr>
                                <tr><th>3</th><td colspan="2">First Instance</td><td></td><td></td><td></td><td></td><td></td></tr>
                                <tr><th>4</th><td></td><td></td><td></td><td></td><td></td><td></td><td></td></tr>
                                <tr><th>5</th><td></td><td></td><td></td><td></td><td></td><td></td><td></td></tr>
                                <tr><th>6</th><td></td><td></td><td></td><td></td><td></td><td></td><td></td></tr>
                                <tr><th>7</th><td></td><td></td><td></td><td></td><td></td><td></td><td></td></tr>
                                <tr><th>8</th><td></td><td></td><td></td><td></td><td></td><td></td><td></td></tr>
                                <tr><th>9</th><td></td><td></td><td></td><td></td><td></td><td></td><td></td></tr>
                                <tr><th>10</th><td></td><td></td><td></td><td></td><td></td><td></td><td></td></tr>
                            </tbody>
                        </table>
                        <div class="v-scroll">
                            <svg viewBox="0 0 12 10"><path d="M6 1l5 8H1z"/></svg>
                            <span></span>
                            <svg viewBox="0 0 12 10"><path d="M6 9l5-8H1z"/></svg>
                        </div>
                    </div>
                    <div class="sheet-bar">
                        <svg class="i14 prev" viewBox="0 0 14 14"><path d="M9 2L4 7l5 5" fill="none" stroke="#999" stroke-width="1.6"/></svg>
                        <svg class="i14" viewBox="0 0 14 14"><path d="M5 2l5 5-5 5" fill="none" stroke="#888" stroke-width="1.6"/></svg>
                        <button class="sheet-tab"><span>Sheet1</span></button>
                        <svg class="i14 plus" viewBox="0 0 14 14"><path d="M7 0v14M0 7h14" stroke="#333" stroke-width="2"/></svg>
                        <div class="h-scroll">
                            <span class="dots">⋮</span>
                            <svg viewBox="0 0 10 12"><path d="M9 1v10L1 6z"/></svg>
                            <div class="track"><span></span></div>
                            <svg viewBox="0 0 10 12"><path d="M1 1v10l8-5z"/></svg>
                        </div>
                    </div>
                    <span class="busy"></span>
                </div>
            </div>
        </section>

        <nav class="model-tabs">
            <div class="nav-arrows"><svg viewBox="0 0 80 16"><path d="M9 4v8M16 4v8l-5-4zM34 4v8l-5-4zM50 4v8l5-4zM66 4v8l5-4zM73 4v8" fill="#77779b" stroke="#77779b"/><path d="M20 0v16M40 0v16M60 0v16" stroke="#77779b"/></svg></div>
            <a href="#" class="active">Model</a>
            <a href="#">3D Views</a>
            <a href="#">Motion Study 1</a>
        </nav>

        <footer class="taskbar">
            <button class="start" aria-label="开始菜单"><svg viewBox="0 0 22 22"><path d="M0 3l9-1v8H0zM10 2l12-2v10H10zM0 11h9v8l-9-1zM10 11h12v11l-12-2z" fill="#fff"/></svg></button>
            <label class="task-search"><svg><use href="#search"/></svg><input type="text" placeholder="搜索" aria-label="搜索任务栏"></label>
            <button class="task meeting" aria-label="腾讯会议"><span><svg><use href="#meeting"/></svg></span></button>
            <button class="task running" aria-label="SOLIDWORKS"><svg><use href="#solidworks"/></svg></button>
            <div class="tray">
                <span class="desktop">桌面</span><span class="more">»</span>
                <svg viewBox="0 0 20 20"><path d="M3 14l7-8 7 8" fill="none" stroke="#ddd" stroke-width="1.6"/></svg>
                <svg><use href="#recycle"/></svg>
                <svg viewBox="0 0 20 20"><path d="M4 16a4 4 0 0 1 0-8 6 6 0 0 1 10-1 4 4 0 0 1 3 9z" fill="#e4e4ec"/></svg>
                <svg viewBox="0 0 20 20"><circle cx="10" cy="10" r="8" fill="#dfe8df"/><path d="M2 11c3-3 5-3 8-6 3 3 5 3 8 6a8 8 0 0 1-16 0z" fill="#41a548"/></svg>
                <svg viewBox="0 0 20 20"><path d="M1 4l16-3v17l-16-2z" fill="none" stroke="#ccc" stroke-width="1.5"/><path d="M13 7c-3-3-7 0-5 3s5 1 4-1" fill="none" stroke="#ccc" stroke-width="1.5"/><circle cx="14" cy="15" r="4.500" fill="#f0982c"/></svg>
                <svg viewBox="0 0 20 20"><path d="M3 1h6v7H3zM11 1h6v7h-6zM3 8h6v11l-3-3-3 3zM11 8h6v11l-3-3-3 3z" fill="#f2f2f2"/><path d="M3 8h14" stroke="#1e1f21"/></svg>
                <svg viewBox="0 0 20 20"><rect width="20" height="20" rx="3" fill="#fff"/><path d="M9 3h8l-1 12h-4l1-8H9z" fill="#12c8c8"/><path d="M3 6h8l-1 11H6l1-7H3z" fill="#0a62e8"/><circle cx="16" cy="16" r="4" fill="#e8e020"/></svg>
                <svg viewBox="0 0 20 20"><rect x="3" width="14" height="20" rx="7" fill="#1f7ad0"/><path d="M6 6l8 8-4 3V3l4 3-8 8" fill="none" stroke="#fff" stroke-width="1.4"/></svg>
                <svg viewBox="0 0 20 20"><circle cx="10" cy="10" r="8" fill="none" stroke="#3f8299" stroke-width="1.6"/><path d="M5 10a5 5 0 0 1 8-4M15 11a5 5 0 0 1-8 3M7 10h2M12 10h2" fill="none" stroke="#3f94b5" stroke-width="2"/></svg>
                <svg viewBox="0 0 20 20"><path d="M4 7h14v8H4z" fill="#ddd"/><path d="M1 3v4h5V3M3 7v4" fill="none" stroke="#ddd" stroke-width="1.6"/><path d="M18 9h2v4h-2z" fill="#ddd"/></svg>
                <svg viewBox="0 0 20 20"><path d="M5 3h14v11H5M12 14v4M8 18h9M1 2v6h4V2z" fill="none" stroke="#ccc" stroke-width="1.5"/></svg>
                <svg viewBox="0 0 20 20"><path d="M1 7h3l4-4v14l-4-4H1zM12 7l6 6M18 7l-6 6" fill="none" stroke="#ccc" stroke-width="1.5"/></svg>
                <span class="ime">中</span>
                <div class="clock"><time>10:28</time><time>2024/6/3</time></div>
                <button class="notice" aria-label="通知"><svg viewBox="0 0 22 22"><path d="M1 1h20v15h-9l-6 5v-5H1z" fill="#fff"/><path d="M4 5h14M4 8h14M4 11h14" stroke="#333" stroke-width="1.4"/></svg><span>1</span></button>
            </div>
        </footer>

        <div class="floating-logo"><svg><use href="#meeting"/></svg></div>
    </main>
</body>
</html>
```
FILE: styles.css
```
* {
    box-sizing: border-box;
}

body {
    margin: 0;
    padding: 0 50px 0 51px;
    background: #000;
    color: #333;
    font-family: "Noto Sans", "Noto Sans CJK SC", sans-serif;
    font-size: 15px;
    line-height: 20px;
}

button, input, select {
    font: inherit;
    color: inherit;
}

button {
    display: flex;
    align-items: center;
    padding: 0;
    border: none;
    background: none;
}

a {
    color: inherit;
    text-decoration: none;
}

h1, h2, h3, p {
    margin: 0;
}

svg {
    flex: none;
}

.sprite {
    position: absolute;
    width: 0;
    height: 0;
}

.app {
    position: relative;
    display: flex;
    flex-direction: column;
    height: 100vh;
    overflow: hidden;
    background: #f0f0f0;
}

.i14 { width: 14px; height: 14px; }
.i16 { width: 16px; height: 16px; }
.i18 { width: 18px; height: 18px; }
.i20 { width: 20px; height: 20px; }
.caret { width: 10px; height: 10px; }
.chev { width: 14px; height: 10px; }

.faded {
    color: #aaa;
}

/* Title and menu */
.title-bar {
    display: flex;
    align-items: center;
    height: 28px;
    padding: 0 24px 0 1px;
    background: #fff;
    color: #8c8c8c;
}

.app-icon {
    width: 22px;
    height: 22px;
    margin-right: 5px;
}

.title-bar h1 {
    font-size: 15px;
    font-weight: normal;
}

.sw-letters {
    font: bold 10px "Liberation Sans", sans-serif;
    fill: #fff;
}

.sw-year {
    font: bold 8px "Liberation Sans", sans-serif;
    fill: #fff;
}

.window-buttons {
    display: flex;
    gap: 42px;
    margin-left: auto;
}

.window-buttons svg, .doc-buttons svg {
    width: 16px;
    height: 16px;
    fill: none;
    stroke: #999;
    stroke-width: 1.3;
}

.menu-bar {
    display: flex;
    gap: 15px;
    height: 23px;
    padding-left: 6px;
    background: #fff;
    color: #666;
    font-size: 15px;
    line-height: 24px;
}

/* Quick access bar */
.quick-bar {
    display: grid;
    grid-template-columns: 20px 697px 457px;
    align-items: center;
    height: 62px;
    padding-left: 19px;
}

.excel-icon {
    width: 20px;
    height: 20px;
}

.quick-tools {
    display: flex;
    align-items: center;
    gap: 14px;
    padding-left: 156px;
}

.quick-tools button {
    gap: 6px;
}

.quick-tools button:last-child {
    margin-left: 1px;
}

.search-box {
    display: flex;
    align-items: center;
    gap: 15px;
    height: 40px;
    padding: 0 26px;
    border: 1px solid #d6d6d6;
    border-radius: 3px;
    background: #fcfcfc;
    color: #666;
    font-size: 17px;
}

.search-box svg {
    width: 18px;
    height: 18px;
}

.search-box input, .task-search input {
    flex: 1;
    min-width: 0;
    padding: 0;
    border: none;
    outline: none;
    background: none;
}

.search-box input::placeholder, .task-search input::placeholder {
    color: #666;
    opacity: 1;
}

/* Tabs */
.tab-bar {
    display: flex;
    align-items: center;
    gap: 23px;
    height: 37px;
    padding: 0 16px 0 11px;
    font-size: 17px;
}

.tab-bar a {
    height: 32px;
    line-height: 30px;
    white-space: nowrap;
}

.tab-bar .active {
    margin-right: 4px;
    border-bottom: 3px solid #217346;
    color: #111;
    font-weight: bold;
}

.comment-btn, .share-btn {
    gap: 4px;
    height: 30px;
    padding: 0 6px;
    border: 1px solid #8a8a8a;
    border-radius: 4px;
    background: #fff;
    color: #222;
}

.comment-btn {
    margin-left: auto;
}

.comment-btn svg, .share-btn svg:first-child {
    width: 14px;
    height: 14px;
}

.share-btn {
    margin-left: -13px;
    border-color: #e9e9e9;
    background: none;
    color: #ccc;
}

/* Ribbon */
.ribbon {
    display: grid;
    grid-template-columns: 127fr 344fr 330fr 199fr 85fr 85fr 245fr 111fr 233fr 71fr 57fr;
    grid-template-rows: 124px;
    margin: 0 11px 0 10px;
    border-radius: 6px;
    background: #fff;
    white-space: nowrap;
}

.group {
    position: relative;
    display: flex;
    flex-direction: column;
    min-width: 0;
}

/* divider between groups */
.group::after {
    content: "";
    position: absolute;
    top: 8px;
    right: 0;
    bottom: 6px;
    width: 1px;
    background: #dcdcdc;
}

.group-body {
    flex: 1;
    min-height: 0;
}

.group-label {
    height: 29px;
    line-height: 29px;
    text-align: center;
    color: #333;
}

.with-launcher {
    padding-right: 18px;
}

.group-label svg {
    position: absolute;
    right: 4px;
    bottom: 6px;
    width: 12px;
    height: 12px;
}

.row {
    display: flex;
    align-items: center;
    height: 30px;
}

.spread { justify-content: space-between; }
.gap-5 { gap: 5px; }
.gap-7 { gap: 7px; }
.gap-12 { gap: 12px; }

.sep {
    width: 1px;
    height: 28px;
    background: #dcdcdc;
}

.sep.tall {
    height: 76px;
    margin: 0 11px 0 9px;
}

.center {
    display: flex;
    justify-content: center;
}

.big {
    flex-direction: column;
    align-self: flex-start;
    padding-top: 9px;
    line-height: 19px;
}

.big > svg:first-child {
    width: 36px;
    height: 36px;
    margin-bottom: 4px;
}

.big > .caret {
    margin-top: 5px;
}

.big:disabled {
    color: #c4c4c4;
}

.caret.inline {
    margin-left: 4px;
}

.stack {
    display: flex;
    flex-direction: column;
    padding-top: 4px;
}

.stack button {
    gap: 14px;
    height: 31px;
}

.clipboard {
    display: flex;
    gap: 13px;
    padding-left: 23px;
}

.font-body {
    padding: 14px 15px 0 11px;
}

.font-body .row + .row {
    height: 28px;
    margin-top: 10px;
    padding-left: 5px;
}

.combo {
    position: relative;
}

.combo select {
    width: 100%;
    height: 30px;
    padding: 0 4px;
    border: 1px solid #999;
    border-radius: 4px;
    background: #fff;
    appearance: none;
    outline: none;
}

.combo .caret {
    position: absolute;
    top: 10px;
    right: 4px;
}

.combo-font { width: 210px; }
.combo-size { width: 49px; margin: 0 8px 0 3px; }

.letter {
    justify-content: center;
    font-size: 17px;
}

.grow, .shrink {
    width: 20px;
    font-size: 19px;
    font-weight: 300;
}

.shrink {
    margin-left: 13px;
    font-size: 17px;
}

.letter sup {
    align-self: flex-start;
    font-size: 11px;
    line-height: 12px;
}

.serif {
    font-family: "Liberation Serif", serif;
    font-size: 19px;
}

.phonetic {
    justify-content: center;
    color: #8c9ab0;
    font-size: 10px;
    line-height: 11px;
}

.align-body {
    display: flex;
    padding: 14px 0 0 16px;
}

.align-left {
    width: 153px;
}

.align-left .row + .row, .align-right .row + .row {
    height: 28px;
    margin-top: 10px;
}

.pressed {
    justify-content: center;
    width: 30px;
    height: 30px;
    border: 1px solid #888;
    border-radius: 4px;
    background: #ececec;
}

.lines {
    fill: none;
    stroke: #555;
    stroke-width: 1.5;
}

.lines .teal {
    stroke: #2a8a80;
}

.tiny-ab {
    font: 11px "Noto Sans", sans-serif;
    fill: #444;
}

.merge-caret {
    margin-left: 8px;
}

.number-body {
    padding: 14px 10px 0 11px;
}

.number-body .row {
    height: 28px;
    margin: 10px 5px 0;
}

.percent {
    justify-content: center;
    font-size: 22px;
}

.decimal {
    font: 10px "Noto Sans", sans-serif;
    fill: #444;
}

.styles-body {
    gap: 9px;
}

.cells-stack {
    width: 84px;
}

.cells-stack button {
    gap: 5px;
}

.cells-stack .caret {
    margin-left: auto;
}

.cells-stack .near {
    margin-left: -2px;
}

.edit-body {
    display: flex;
    gap: 7px;
    padding-left: 16px;
}

.edit-body .stack {
    width: 40px;
}

.edit-body .stack button {
    gap: 9px;
}

.collapse {
    align-self: end;
    justify-self: end;
    margin: 0 10px 12px;
}

/* Formula bar */
.formula-bar {
    display: flex;
    height: 30px;
    margin: 11px 11px 1px 10px;
    font-size: 16px;
}

.name-box, .fx-box, .formula-input {
    display: flex;
    align-items: center;
    border-radius: 4px;
    background: #fff;
}

.name-box {
    width: 124px;
    padding-right: 5px;
}

.name-box input, .formula-input input {
    flex: 1;
    min-width: 0;
    padding: 0;
    border: none;
    outline: none;
    background: none;
}

.formula-bar .dots {
    width: 28px;
    line-height: 30px;
    text-align: center;
    font-weight: bold;
}

.fx-box {
    gap: 14px;
    width: 89px;
    padding-left: 6px;
    color: #aaa;
}

.fx-box i {
    color: #333;
    font: italic 22px/22px "Liberation Serif", serif;
}

.formula-input {
    flex: 1;
    margin-left: 8px;
    padding: 0 4px 0 12px;
}

/* Workspace */
.workspace {
    display: flex;
    flex: 1;
    min-height: 0;
}

.panel {
    position: relative;
    display: flex;
    flex-direction: column;
    width: 230px;
    margin-top: 9px;
    border-top: 1px solid #aaa;
    border-right: 1px solid #999;
    background: #f6f6f6;
    color: #8a8a8a;
    font-size: 13px;
    line-height: 17px;
}

.panel-grip {
    display: flex;
    align-items: center;
    justify-content: center;
    height: 24px;
    border-bottom: 1px solid #ddd;
}

.panel-grip span, .splitter span {
    width: 6px;
    height: 6px;
    border: 1px solid #999;
    border-radius: 50%;
}

.panel-tabs {
    display: flex;
    height: 29px;
    padding: 3px 0 0 2px;
    border-bottom: 1px solid #bbb;
}

.panel-tabs button {
    justify-content: center;
    width: 40px;
    border: 1px solid #aaa;
    border-width: 1px 1px 0 0;
    background: #d2d2d2;
}

.panel-tabs .active {
    border-color: #f6f6f6;
    background: #f8f8f8;
}

.panel-tabs svg, .task-pane svg {
    width: 19px;
    height: 19px;
}

.panel-title {
    display: flex;
    align-items: center;
    height: 40px;
    padding: 0 17px 0 13px;
}

.panel-title h2 {
    flex: 1;
    margin-left: 9px;
    color: #222;
    font-size: 14px;
    white-space: nowrap;
}

.panel-actions {
    display: flex;
    gap: 20px;
    height: 33px;
    padding: 5px 0 0 11px;
    border-bottom: 1px solid #bbb;
    color: #aaa;
}

.panel-scroll {
    display: flex;
    flex: 1;
    min-height: 0;
}

.panel-form {
    flex: 1;
    padding: 11px 0 0 5px;
}

.panel-form fieldset {
    min-width: 0;
    margin: 0 0 8px;
    padding: 0 4px 9px 4px;
    border: none;
    border-bottom: 1px solid #aaa;
}

.panel-form fieldset:last-child {
    margin-bottom: 0;
    border: none;
}

.panel-form h3 {
    display: flex;
    align-items: center;
    justify-content: space-between;
    margin-bottom: 6px;
    color: #777;
    font-size: 13px;
    line-height: 17px;
}

.panel-form h3 svg, .panel-scrollbar svg {
    width: 12px;
    height: 9px;
}

.option {
    display: flex;
    align-items: center;
    gap: 3px;
    min-height: 21px;
    padding-left: 39px;
    font-size: 13px;
    white-space: nowrap;
}

.option input {
    flex: none;
    display: grid;
    place-items: center;
    width: 15px;
    height: 15px;
    margin: 0;
    border: 1px solid #ccc;
    background: #fdfdfd;
    appearance: none;
}

.option input[type="radio"] {
    border-radius: 50%;
}

.option input[type="radio"]:checked {
    border: 4px solid #e6e6e6;
    background: #b5b5b5;
}

.option input[type="checkbox"]:checked::before {
    content: "";
    width: 9px;
    height: 5px;
    margin-bottom: 3px;
    border: solid #b5b5b5;
    border-width: 0 0 1px 1px;
    transform: rotate(-45deg);
}

.file-name {
    display: block;
    width: 137px;
    height: 30px;
    margin: 6px 0 10px 39px;
    border: 1px solid #e2e4e6;
    background: #d5d8db;
}

.browse {
    justify-content: center;
    width: 86px;
    height: 29px;
    margin: 0 0 10px 39px;
    background: #c9c9c9;
    color: #999;
}

.edit-control h3 {
    margin-bottom: 8px;
}

.edit-control .option:last-child {
    margin-top: 10px;
}

.panel-form p {
    margin: 0 0 6px;
    color: #b2b2b2;
    white-space: nowrap;
}

.options .option {
    min-height: 26px;
}

.options .warn {
    margin-top: 15px;
}

.panel-scrollbar {
    display: flex;
    flex-direction: column;
    align-items: center;
    width: 18px;
    margin: 8px 6px 8px 4px;
    color: #444;
}

.panel-scrollbar span {
    width: 100%;
    height: 456px;
    margin: 5px 0 auto;
    background: #ccc;
}

.splitter {
    position: absolute;
    z-index: 3;
    top: 314px;
    right: -12px;
    display: flex;
    align-items: center;
    justify-content: center;
    width: 12px;
    height: 49px;
    border: 1px solid #999;
    border-left: none;
    background: #f4f4f4;
}

.viewport {
    position: relative;
    flex: 1;
    min-width: 0;
    overflow: hidden;
    background:
        radial-gradient(ellipse 700px 260px at 42% 0, #fff 20%, transparent),
        radial-gradient(ellipse 500px 500px at 100% 0, #f0f1f1 10%, transparent),
        radial-gradient(ellipse 700px 300px at 100% 100%, #f2f3f5, transparent),
        linear-gradient(#f2f3f6, #e2e4ee 28%, #dee1eb 48%, #fcfcfd 68%, #fff 88%, #f8f8fa);
}

.hud {
    position: absolute;
    top: 13px;
    left: 715px;
    display: flex;
    align-items: center;
    gap: 6px;
}

.hud svg {
    width: 20px;
    height: 20px;
}

.hud i {
    width: 5px;
    border-top: 2px solid #999;
    margin: 0 1px;
}

.hud .dim {
    opacity: .5;
}

.doc-buttons {
    position: absolute;
    top: 16px;
    right: 13px;
    display: flex;
    gap: 10px;
}

.confirm {
    position: absolute;
    top: 46px;
    right: 40px;
    width: 72px;
    height: 56px;
}

.model {
    position: absolute;
    top: 204px;
    right: 280px;
    width: 400px;
    height: 440px;
}

.dimension {
    font: 48px Lato, sans-serif;
    fill: #333;
    text-anchor: middle;
}

.dimension.depth {
    font-size: 42px;
    font-style: italic;
    fill: #4a3fb0;
}

.triad {
    position: absolute;
    bottom: 38px;
    left: 24px;
    width: 80px;
    height: 80px;
    font: 11px "Noto Sans", sans-serif;
}

.axis-x { fill: #c06070; }
.axis-y { fill: #777; }
.axis-z { fill: #2424c8; }

.brand {
    position: absolute;
    right: 40px;
    bottom: 18px;
    width: 216px;
}

.brand-name {
    display: block;
    width: 216px;
    height: 42px;
    margin-bottom: 5px;
}

.brand-name text {
    font: bold 49px "Liberation Sans", sans-serif;
    fill: #d87a30;
}

.brand-cn {
    color: #666;
    font-size: 43px;
    line-height: 54px;
    white-space: nowrap;
}

.task-pane {
    position: absolute;
    top: 65px;
    right: 0;
    border: 1px solid #888;
    border-right: none;
}

.task-pane button {
    justify-content: center;
    width: 33px;
    height: 30px;
    border-bottom: 1px solid #999;
    background: #d6d6d6;
}

.task-pane button:last-child {
    height: 29px;
    border: none;
}

.task-pane .active {
    background: #fff;
}

.bubble {
    position: absolute;
    right: 0;
    bottom: 193px;
    width: 32px;
    height: 40px;
    padding-left: 12px;
    border-radius: 20px 0 0 20px;
    background: #3c82f0;
}

.bubble svg {
    width: 10px;
    height: 14px;
}

/* Embedded sheet */
.excel {
    position: absolute;
    z-index: 2;
    top: 0;
    left: 0;
    width: 715px;
    padding: 8px 4px 4px 0;
    background: repeating-linear-gradient(135deg, #444 0 2px, #ccc 2px 4px);
}

.excel::before {
    content: "";
    position: absolute;
    top: 0;
    left: 0;
    right: 0;
    height: 8px;
    background: #f0f0f0;
}

.sheet-area {
    display: flex;
    height: 292px;
    overflow: hidden;
    background: #f0f0f0;
}

.excel table {
    flex: none;
    width: calc(100% - 26px);
    height: 292px;
    border-collapse: collapse;
    table-layout: fixed;
    background: #fff;
    color: #555;
    font-family: "Noto Sans CJK SC", "Noto Sans", sans-serif;
    font-size: 19px;
    line-height: 24px;
}

.excel th {
    padding: 0;
    background: #f0f0f0;
    color: #777;
    font-weight: normal;
}

.excel thead th {
    height: 25px;
    border-bottom: 1px solid #bbb;
}

.excel tbody th {
    border-right: 1px solid #bbb;
}

.excel td {
    padding: 0 3px;
    border: 1px solid #e4e4e4;
    border-right-color: #e8e8e8;
    font-size: 20px;
    white-space: nowrap;
}

.excel .corner {
    width: 30px;
    background: linear-gradient(135deg, #f0f0f0 60%, #ddd 60%);
}

.v-scroll {
    display: flex;
    flex-direction: column;
    align-items: center;
    width: 26px;
    padding: 4px 0 2px;
}

.v-scroll svg {
    width: 12px;
    height: 10px;
    fill: #666;
}

.v-scroll span {
    width: 10px;
    height: 127px;
    margin: 5px 0 auto;
    border-radius: 5px;
    background: #6b6b6b;
}

.sheet-bar {
    display: flex;
    align-items: center;
    height: 40px;
    background: #f0f0f0;
}

.sheet-bar .prev {
    margin: 0 26px 0 20px;
}

.sheet-tab {
    align-self: flex-start;
    height: 34px;
    margin: 0 58px 0 58px;
    padding: 0 11px;
    background: #fff;
    font-size: 17px;
}

.sheet-tab span {
    height: 31px;
    border-bottom: 3px solid #3f7f62;
    line-height: 30px;
}

.h-scroll {
    display: flex;
    align-items: center;
    gap: 6px;
    margin-left: auto;
    padding-right: 30px;
}

.h-scroll svg {
    width: 10px;
    height: 12px;
    fill: #555;
}

.h-scroll .dots {
    margin-right: 11px;
    font-weight: bold;
}

.track {
    width: 198px;
}

.track span {
    display: block;
    width: 174px;
    height: 11px;
    border-radius: 6px;
    background: #6b6b6b;
}

.busy {
    position: absolute;
    top: 73px;
    left: 350px;
    width: 31px;
    height: 31px;
    border: 8px solid #3f8ddb;
    border-left-color: #3cc4e6;
    border-radius: 50%;
    background: #fff;
}

/* Model tabs */
.model-tabs {
    display: flex;
    height: 18px;
    border-top: 1px solid #999;
    background: #f7f7f7;
    font-size: 15px;
    line-height: 18px;
}

.nav-arrows {
    width: 82px;
    background: #a5a5c0;
}

.nav-arrows svg {
    display: block;
    width: 80px;
    height: 16px;
}

.model-tabs a {
    padding: 0 9px;
    border-right: 1px solid #999;
    background: #cfcfcf;
    overflow: hidden;
    white-space: nowrap;
}

.model-tabs .active {
    padding: 0 12px 0 14px;
    background: #fff;
}

.model-tabs a:last-child {
    padding-right: 18px;
}

/* Taskbar */
.taskbar {
    display: flex;
    height: 59px;
    padding-bottom: 9px;
    border-bottom: 2px solid #0b0b0d;
    background: linear-gradient(#1e1f21 49px, #2c2c31 49px);
    color: #e4e4e4;
}

.start {
    justify-content: center;
    width: 60px;
}

.start svg {
    width: 22px;
    height: 22px;
}

.task-search {
    display: flex;
    align-items: center;
    gap: 14px;
    width: 357px;
    padding-left: 14px;
    background: #f2f2f2;
    color: #444;
    font-size: 19px;
}

.task-search svg {
    width: 21px;
    height: 21px;
}

.task {
    justify-content: center;
    width: 61px;
}

.meeting {
    width: 51px;
    margin: 0 6px 0 9px;
    border-bottom: 4px solid #6b9dbd;
}

.meeting span {
    display: grid;
    place-items: center;
    width: 30px;
    height: 30px;
    border-radius: 6px;
    background: #fff;
}

.meeting svg {
    width: 22px;
    height: 22px;
}

.running {
    border-bottom: 4px solid #cf7428;
    background: #6c5548;
}

.running svg {
    width: 30px;
    height: 30px;
}

.tray {
    display: flex;
    align-items: center;
    gap: 10px;
    margin: 0 4px 0 auto;
}

.tray > svg {
    width: 20px;
    height: 20px;
}

.desktop {
    color: #ccc;
}

.more {
    align-self: flex-start;
    margin-right: -2px;
    font-size: 18px;
}

.ime {
    font-size: 18px;
}

.clock {
    display: flex;
    flex-direction: column;
    align-items: center;
    gap: 3px;
    width: 72px;
    margin-left: 6px;
    font-size: 15px;
}

.notice {
    position: relative;
    width: 48px;
    height: 48px;
    margin-left: 14px;
    border-right: 1px solid #666;
}

.notice svg {
    width: 22px;
    height: 22px;
}

.notice span {
    position: absolute;
    top: 24px;
    left: 9px;
    width: 20px;
    height: 20px;
    border: 1px solid #888;
    border-radius: 50%;
    background: #333;
    line-height: 18px;
}

.floating-logo {
    position: absolute;
    z-index: 5;
    top: 47px;
    left: 35px;
    display: grid;
    place-items: center;
    width: 92px;
    height: 92px;
    border: 1px solid #ccd0da;
    border-radius: 50%;
    background: #f0f3fa;
}

.floating-logo svg {
    width: 54px;
    height: 48px;
}
```
